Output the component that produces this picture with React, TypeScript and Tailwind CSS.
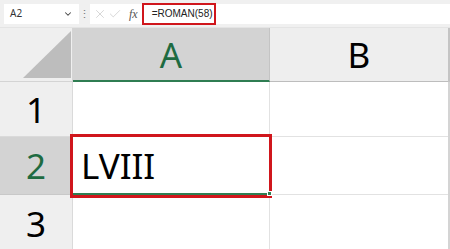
import { ChevronDown, X, Check } from "lucide-react"

const hdr = "flex items-center justify-center text-[35px] leading-none"

export default function App() {
  return (
    <div
      className="w-[450px] h-[249px] overflow-hidden bg-white"
      style={{ fontFamily: '"Noto Sans", "Open Sans", sans-serif' }}
    >
      {/* formula bar */}
      <div className="h-[28px] bg-[#f0f0f0] flex items-center pl-[4px] border-b border-[#e4e4e4]">
        <div className="w-[75px] h-[20px] bg-white flex items-center justify-between pl-[6px] pr-[6px]">
          <span className="text-[10px] text-[#333]">A2</span>
          <ChevronDown size={10} strokeWidth={2.5} className="text-[#444]" />
        </div>
        <div className="w-[11px] flex justify-center text-[11px] text-[#777] leading-none">⋮</div>
        <div className="flex-1 h-[20px] bg-white flex items-center pl-[3px]">
          <X size={14} strokeWidth={1.2} className="text-[#c6c6c6]" />
          <Check size={14} strokeWidth={1.2} className="text-[#c6c6c6] ml-[1px]" />
          <span
            className="ml-[7px] text-[12px] italic text-[#555]"
            style={{ fontFamily: '"Liberation Serif", serif' }}
          >
            fx
          </span>
          <div
            className="ml-[4px] h-[22px] w-[74px] shrink-0 whitespace-nowrap pl-[8px] border-2 border-[#d0161c] flex items-center text-[10px] text-[#222]"
            style={{ fontFamily: '"Liberation Sans", sans-serif' }}
          >
            =ROMAN(58)
          </div>
        </div>
      </div>

      {/* grid */}
      <div className="grid grid-cols-[73px_197px_178px_2px] grid-rows-[54px_55px_58px_56px]">
        {/* corner */}
        <div className="bg-[#efefef] border-r border-b border-[#d4d4d4] flex items-end justify-end pr-[1px] pb-[3px]">
          <div
            className="w-[48px] h-[47px] bg-[#bdbdbd]"
            style={{ clipPath: "polygon(100% 0, 100% 100%, 0 100%)" }}
          />
        </div>
        <div className={`${hdr} bg-[#d3d3d3] text-[#1e6b41] border-b-2 border-[#2f7d52] border-r border-r-[#c4c4c4]`}>
          A
        </div>
        <div className={`${hdr} bg-[#eeeeee] text-black border-b border-[#bdbdbd]`}>B</div>
        <div className="bg-white border-l-2 border-[#c4c4c4]" />

        {/* row 1 */}
        <div className={`${hdr} bg-[#efefef] text-black border-r border-b border-[#dadada]`}>1</div>
        <div className="border-r border-b border-[#e2e2e2]" />
        <div className="border-b border-[#e2e2e2]" />
        <div className="border-l-2 border-[#d4d4d4]" />

        {/* row 2 */}
        <div className={`${hdr} bg-[#d3d3d3] text-[#1e6b41] border-r border-b border-[#c8c8c8]`}>2</div>
        <div className="relative border-r border-b-2 border-[#2f7d52] flex items-center pl-[8px] text-[35px] leading-none text-black">
          LVIII
          <div className="absolute -left-[3px] -top-[3px] -right-[3px] -bottom-[5px] border-[3px] border-[#d0161c] pointer-events-none" />
          <div className="absolute -right-[3px] -bottom-[3px] w-[5px] h-[5px] bg-[#2f7d52] border border-white" />
        </div>
        <div className="border-b border-[#e2e2e2]" />
        <div className="border-l-2 border-[#d4d4d4]" />

        {/* row 3 */}
        <div className={`${hdr} bg-[#efefef] text-black border-r border-[#dadada]`}>3</div>
        <div className="border-r border-[#e2e2e2]" />
        <div />
        <div className="border-l-2 border-[#d4d4d4]" />
      </div>
    </div>
  )
}
